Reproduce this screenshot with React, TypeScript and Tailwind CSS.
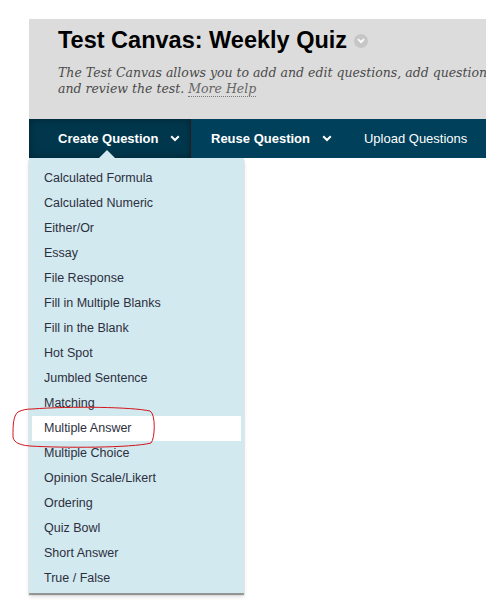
import React from "react";

const items = [
  "Calculated Formula",
  "Calculated Numeric",
  "Either/Or",
  "Essay",
  "File Response",
  "Fill in Multiple Blanks",
  "Fill in the Blank",
  "Hot Spot",
  "Jumbled Sentence",
  "Matching",
  "Multiple Answer",
  "Multiple Choice",
  "Opinion Scale/Likert",
  "Ordering",
  "Quiz Bowl",
  "Short Answer",
  "True / False",
];

function Chevron() {
  return (
    <svg width="10" height="7" viewBox="0 0 10 7">
      <path d="M1.2 1.3 L5 5 L8.8 1.3" fill="none" stroke="white" strokeWidth="2" />
    </svg>
  );
}

export default function App() {
  return (
    <div className="relative w-[499px] h-[613px] bg-white overflow-hidden" style={{ fontFamily: '"Liberation Sans", Arial, sans-serif' }}>
      <div className="ml-[29px] mt-[19px] w-[457px]">
        <div className="bg-[#dcdcdc] h-[100px] pl-[29px] pt-[7px] overflow-hidden">
          <div className="flex items-center gap-[7px]">
            <h1 className="text-[23.5px] leading-[28px] font-bold text-black">Test Canvas: Weekly Quiz</h1>
            <span className="mt-[2px] flex items-center justify-center w-[14px] h-[14px] rounded-full bg-[#c6c6c6]">
              <svg width="8" height="6" viewBox="0 0 8 6">
                <path d="M1 1.2 L4 4.2 L7 1.2" fill="none" stroke="white" strokeWidth="1.8" />
              </svg>
            </span>
          </div>
          <p
            className="mt-[11px] italic text-[12.5px] leading-[16px] text-[#4a4a4a] whitespace-nowrap"
            style={{ fontFamily: '"DejaVu Serif", Georgia, serif' }}
          >
            The Test Canvas allows you to add and edit questions, add question sets, reorder questions,
            <br />
            and review the test.{" "}
            <span className="text-[#666] border-b border-dotted border-[#777]">More Help</span>
          </p>
        </div>
        <div className="h-[39px] bg-[#00405a] flex items-stretch text-white text-[13px]">
          <div className="w-[163px] bg-[#00374c] border-r border-[#2b2f36] flex items-center pl-[29px] gap-[12px] font-bold shadow-[inset_0_0_8px_rgba(0,0,0,0.35)]">
            <span>Create Question</span>
            <Chevron />
          </div>
          <div className="flex items-center pl-[19px] gap-[12px] font-bold">
            <span>Reuse Question</span>
            <Chevron />
          </div>
          <div className="flex items-center pl-[32px]">
            <span>Upload Questions</span>
          </div>
        </div>
      </div>
      <div className="absolute left-[29px] top-[158px] w-[215px] bg-[#d2e9ef] pt-[8px] pb-[2px] shadow-[0_2px_1px_rgba(0,0,0,0.35),0_4px_4px_rgba(0,0,0,0.12)]">
        <div className="absolute left-[69px] top-[-8px] w-0 h-0 border-l-[9px] border-r-[9px] border-b-[9px] border-l-transparent border-r-transparent border-b-[#d2e9ef]" />
        {items.map((it) => (
          <div
            key={it}
            className={
              it === "Multiple Answer"
                ? "h-[25px] mx-[3px] pl-[12px] flex items-center bg-white text-[12.5px] text-[#2d2f3e]"
                : "h-[25px] pl-[15px] flex items-center text-[12.5px] text-[#2d2f3e]"
            }
          >
            {it}
          </div>
        ))}
      </div>
      <svg className="absolute left-[12px] top-[406px]" width="145" height="43" viewBox="0 0 145 43">
        <path
          d="M20 3 C60 0 120 1 138 5 C144 8 143 33 139 37 C120 42 50 42 18 40 C5 39 1 35 1 30 C1 20 1 10 6 6 C10 4 14 3 20 3 Z"
          fill="none"
          stroke="#d4141a"
          strokeWidth="1"
        />
      </svg>
    </div>
  );
}
